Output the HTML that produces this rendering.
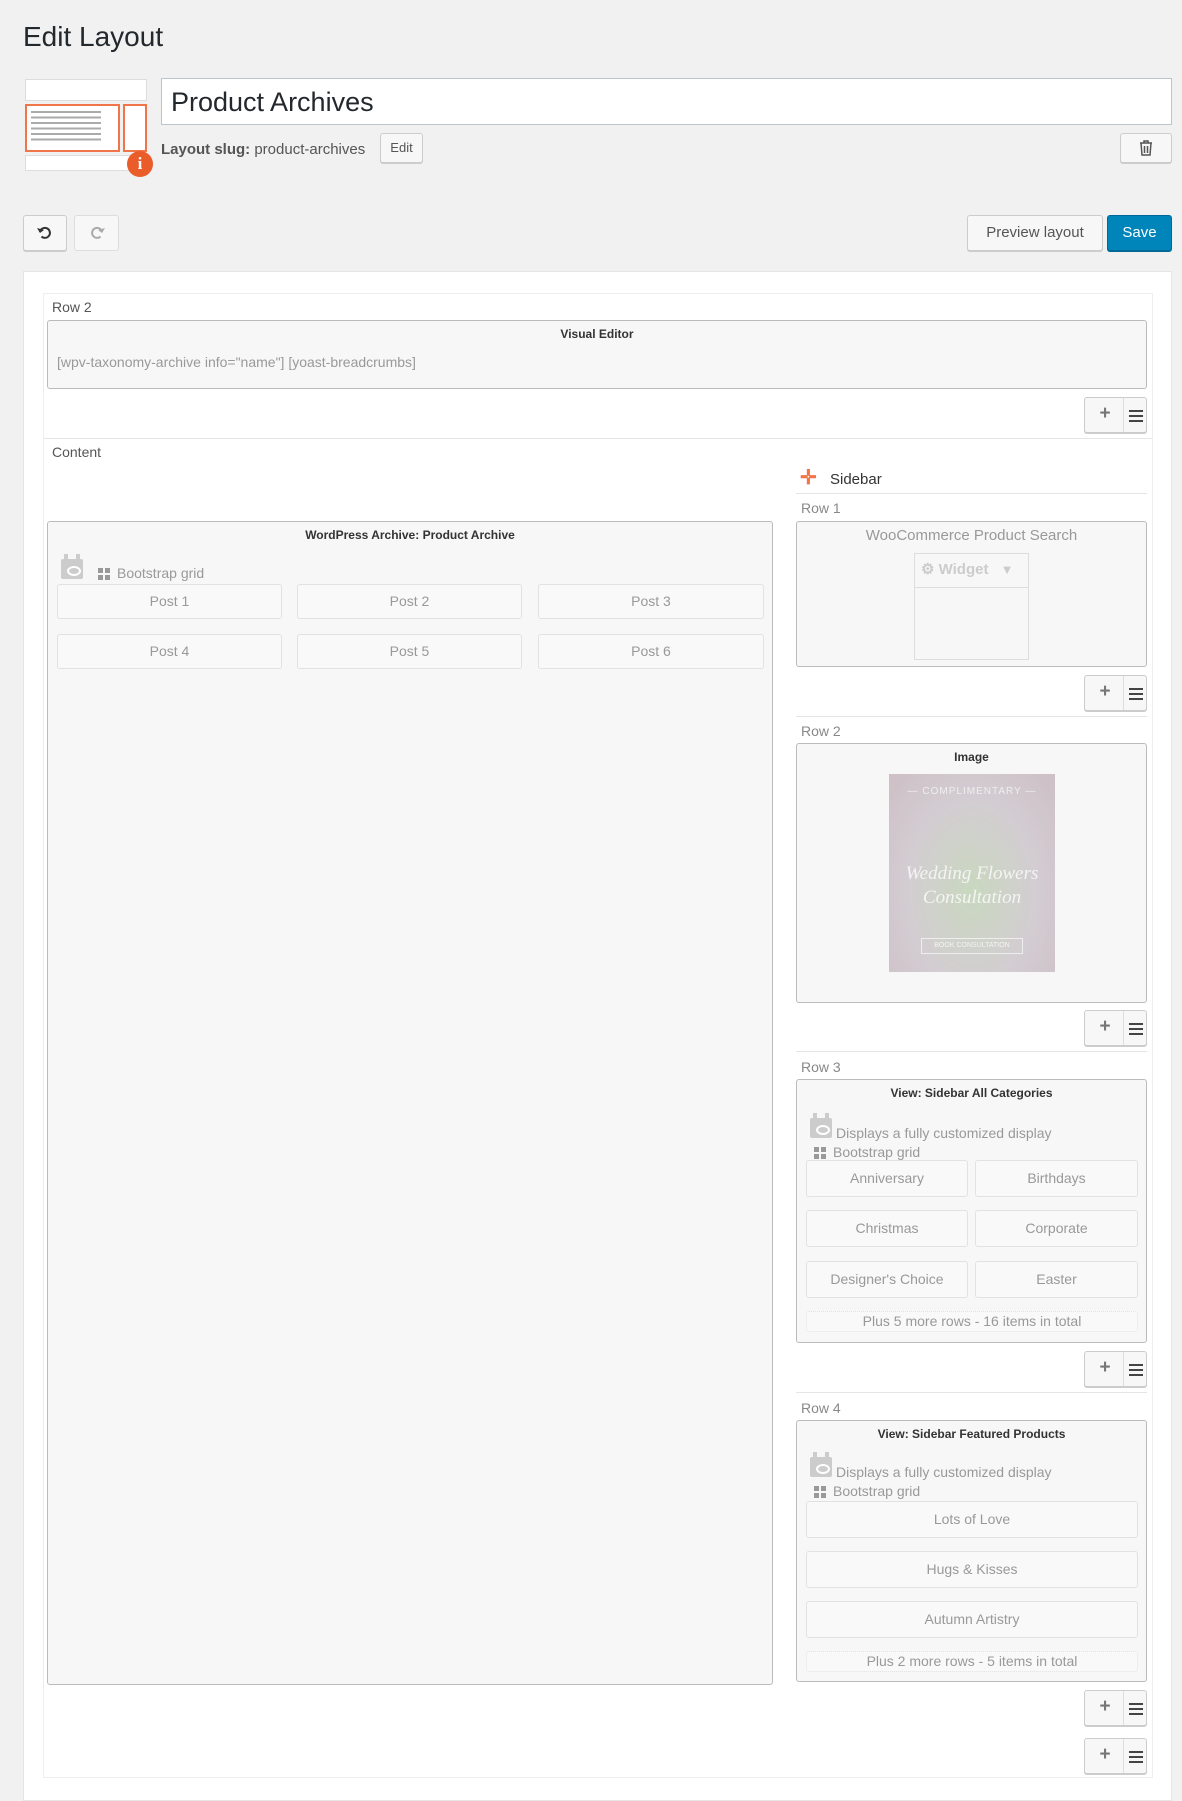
<!DOCTYPE html>
<html><head><meta charset="utf-8"><style>
*{box-sizing:border-box;margin:0;padding:0}
body{width:1182px;height:1788px;background:#f1f1f1;font-family:"Liberation Sans",sans-serif;color:#444;position:relative;overflow:hidden}
.a{position:absolute}
.btn{position:absolute;background:#f7f7f7;border:1px solid #ccc;border-radius:3px;box-shadow:0 1px 0 #ccc;font-size:15px;color:#555;text-align:center}
.cell{position:absolute;background:#f9f9f9;border:1px solid #e2e2e2;border-radius:3px;color:#999;font-size:14px;text-align:center}
.box{position:absolute;background:#f7f7f7;border:1px solid #bbb;border-radius:3px}
.lbl{position:absolute;font-size:14px;color:#555}
.ttl{position:absolute;font-size:12px;font-weight:bold;color:#333;text-align:center;left:0;right:0}
.line{position:absolute;height:1px;background:#e5e5e5}
.pm{position:absolute;width:63px;height:36px;border:1px solid #ccc;border-radius:3px;background:#f7f7f7;box-shadow:0 1px 0 #ccc}
.pm:before{content:"+";position:absolute;left:5px;top:5px;width:30px;text-align:center;font-size:19px;line-height:22px;font-weight:bold;color:#777}
.pm:after{content:"";position:absolute;left:38px;top:0;bottom:0;border-left:1px solid #ddd}
.pm i{position:absolute;left:44px;top:12px;width:14px;height:2px;background:#444;box-shadow:0 5px 0 #444,0 10px 0 #444}
.eye{position:absolute;width:22px;height:20px;background:#ccc;border-radius:2px}
.eye:before{content:"";position:absolute;left:3px;top:-5px;width:4px;height:6px;background:#ccc;box-shadow:12px 0 0 #ccc}
.eye:after{content:"";position:absolute;left:6px;top:7px;width:10px;height:6px;border:2px solid #fff;border-radius:50%}
.grid{position:absolute;width:12px;height:12px;background:linear-gradient(#f7f7f7,#f7f7f7) 5px 0/2px 12px no-repeat,linear-gradient(#f7f7f7,#f7f7f7) 0 5px/12px 2px no-repeat,#999}
.gt{font-size:14px;color:#999}
</style></head><body>
<div class="a" style="left:23px;top:21px;font-size:28px;color:#23282d">Edit Layout</div>

<div class="a" style="left:25px;top:79px;width:122px;height:22px;background:#fff;border:1px solid #ddd"></div>
<div class="a" style="left:25px;top:104px;width:95px;height:48px;background:#fff;border:2px solid #f0764a"></div>
<div class="a" style="left:31px;top:111px;width:70px;height:33px;background:repeating-linear-gradient(#aaa 0 2px,transparent 2px 5.5px)"></div>
<div class="a" style="left:123px;top:104px;width:24px;height:48px;background:#fff;border:2px solid #f0764a"></div>
<div class="a" style="left:25px;top:155px;width:122px;height:16px;background:#fff;border:1px solid #ddd"></div>
<div class="a" style="left:127px;top:151px;width:26px;height:26px;border-radius:50%;background:#ea5d2b;color:#fff;font-weight:bold;font-size:17px;text-align:center;line-height:26px;font-family:'Liberation Serif',serif">i</div>

<div class="a" style="left:161px;top:78px;width:1011px;height:47px;background:#fff;border:1px solid #b9c6d0"></div>
<div class="a" style="left:171px;top:87px;font-size:27px;color:#23282d">Product Archives</div>
<div class="a" style="left:161px;top:141px;font-size:15px;color:#555"><b>Layout slug:</b> product-archives</div>
<div class="btn" style="left:380px;top:133px;width:43px;height:30px;line-height:28px;font-size:13px">Edit</div>
<div class="btn" style="left:1120px;top:133px;width:52px;height:30px"><svg width="20" height="20" viewBox="0 0 20 20" style="margin-top:4px"><path d="M4 5h12M8 5V3h4v2M5 5l1 12h8l1-12M8.5 8v7M11.5 8v7" fill="none" stroke="#555" stroke-width="1.5"/></svg></div>

<div class="btn" style="left:23px;top:215px;width:44px;height:36px"><svg width="18" height="18" viewBox="0 0 18 18" style="margin-top:8px"><path d="M4 8a5 5 0 1 1 1.5 4.5" fill="none" stroke="#333" stroke-width="2"/><path d="M1 4l3 5 4-3z" fill="#333"/></svg></div>
<div class="btn" style="left:74px;top:215px;width:45px;height:36px;box-shadow:none;border-color:#ddd"><svg width="18" height="18" viewBox="0 0 18 18" style="margin-top:8px"><path d="M14 8a5 5 0 1 0-1.5 4.5" fill="none" stroke="#aaa" stroke-width="2"/><path d="M17 4l-3 5-4-3z" fill="#aaa"/></svg></div>
<div class="btn" style="left:967px;top:215px;width:136px;height:36px;line-height:34px">Preview layout</div>
<div class="btn" style="left:1107px;top:215px;width:65px;height:36px;line-height:34px;background:#0085ba;border-color:#006799;color:#fff;box-shadow:0 1px 0 #006799">Save</div>

<div class="a" style="left:23px;top:271px;width:1149px;height:1530px;background:#fff;border:1px solid #e5e5e5"></div>
<div class="a" style="left:43px;top:293px;width:1110px;height:1485px;background:#fff;border:1px solid #eee"></div>

<div class="lbl" style="left:52px;top:299px">Row 2</div>
<div class="box" style="left:47px;top:320px;width:1100px;height:69px">
 <div class="ttl" style="top:6px">Visual Editor</div>
 <div class="a" style="left:9px;top:33px;font-size:14px;color:#999">[wpv-taxonomy-archive info="name"] [yoast-breadcrumbs]</div>
</div>
<div class="pm" style="left:1084px;top:397px"><i></i></div>
<div class="line" style="left:44px;top:438px;width:1108px"></div>
<div class="lbl" style="left:52px;top:444px">Content</div>

<div class="box" style="left:47px;top:521px;width:726px;height:1164px">
 <div class="ttl" style="top:6px">WordPress Archive: Product Archive</div>
 <div class="eye" style="left:13px;top:37px"></div>
 <div class="grid" style="left:50px;top:46px"></div>
 <div class="a gt" style="left:69px;top:43px">Bootstrap grid</div>
</div>
<div class="cell" style="left:57px;top:584px;width:225px;height:35px;line-height:33px">Post 1</div>
<div class="cell" style="left:297px;top:584px;width:225px;height:35px;line-height:33px">Post 2</div>
<div class="cell" style="left:538px;top:584px;width:226px;height:35px;line-height:33px">Post 3</div>
<div class="cell" style="left:57px;top:634px;width:225px;height:35px;line-height:33px">Post 4</div>
<div class="cell" style="left:297px;top:634px;width:225px;height:35px;line-height:33px">Post 5</div>
<div class="cell" style="left:538px;top:634px;width:226px;height:35px;line-height:33px">Post 6</div>

<div class="a" style="left:800px;top:465px;color:#f0764a;font-size:20px;font-weight:bold">✛</div>
<div class="a" style="left:830px;top:471px;font-size:15px;color:#333">Sidebar</div>
<div class="line" style="left:796px;top:493px;width:351px"></div>
<div class="lbl" style="left:801px;top:500px;color:#888">Row 1</div>
<div class="box" style="left:796px;top:521px;width:351px;height:146px">
 <div class="ttl" style="top:5px;font-size:15px;font-weight:normal;color:#999">WooCommerce Product Search</div>
 <div class="a" style="left:117px;top:31px;width:115px;height:107px;border:1px solid #ddd;background:#f7f7f7">
  <div class="a" style="left:0;right:0;top:0;height:34px;border-bottom:1px solid #ddd;color:#ccc;font-size:15px;font-weight:bold;line-height:32px;padding-left:6px">⚙ Widget <span style="margin-left:8px;font-size:13px">▼</span></div>
 </div>
</div>
<div class="pm" style="left:1084px;top:675px"><i></i></div>
<div class="line" style="left:796px;top:716px;width:351px"></div>
<div class="lbl" style="left:801px;top:723px;color:#888">Row 2</div>
<div class="box" style="left:796px;top:743px;width:351px;height:260px">
 <div class="ttl" style="top:6px">Image</div>
 <div class="a" style="left:92px;top:30px;width:166px;height:198px;background:radial-gradient(ellipse at 50% 60%,#c9d8bf 0,#d3cdd2 55%,#cdbfc5 100%);overflow:hidden">
  <div class="a" style="left:0;right:0;top:12px;text-align:center;color:#eee;font-size:10px;letter-spacing:1px">— COMPLIMENTARY —</div>
  <div class="a" style="left:0;right:0;top:88px;text-align:center;color:#f4f4f4;font-family:'Liberation Serif',serif;font-style:italic;font-size:19px;line-height:24px">Wedding Flowers<br>Consultation</div>
  <div class="a" style="left:32px;top:164px;width:102px;height:16px;border:1px solid #eee;color:#f4f4f4;font-size:7px;text-align:center;line-height:14px">BOOK CONSULTATION</div>
 </div>
</div>
<div class="pm" style="left:1084px;top:1010px"><i></i></div>
<div class="line" style="left:796px;top:1051px;width:351px"></div>
<div class="lbl" style="left:801px;top:1059px;color:#888">Row 3</div>
<div class="box" style="left:796px;top:1079px;width:351px;height:264px">
 <div class="ttl" style="top:6px">View: Sidebar All Categories</div>
 <div class="eye" style="left:13px;top:38px"></div>
 <div class="a gt" style="left:39px;top:45px">Displays a fully customized display</div>
 <div class="grid" style="left:17px;top:67px"></div>
 <div class="a gt" style="left:36px;top:64px">Bootstrap grid</div>
</div>
<div class="cell" style="left:806px;top:1160px;width:162px;height:37px;line-height:35px">Anniversary</div>
<div class="cell" style="left:975px;top:1160px;width:163px;height:37px;line-height:35px">Birthdays</div>
<div class="cell" style="left:806px;top:1210px;width:162px;height:37px;line-height:35px">Christmas</div>
<div class="cell" style="left:975px;top:1210px;width:163px;height:37px;line-height:35px">Corporate</div>
<div class="cell" style="left:806px;top:1261px;width:162px;height:37px;line-height:35px">Designer's Choice</div>
<div class="cell" style="left:975px;top:1261px;width:163px;height:37px;line-height:35px">Easter</div>
<div class="cell" style="left:806px;top:1311px;width:332px;height:21px;line-height:19px;border-style:dotted">Plus 5 more rows - 16 items in total</div>
<div class="pm" style="left:1084px;top:1351px"><i></i></div>
<div class="line" style="left:796px;top:1392px;width:351px"></div>
<div class="lbl" style="left:801px;top:1400px;color:#888">Row 4</div>
<div class="box" style="left:796px;top:1420px;width:351px;height:262px">
 <div class="ttl" style="top:6px">View: Sidebar Featured Products</div>
 <div class="eye" style="left:13px;top:36px"></div>
 <div class="a gt" style="left:39px;top:43px">Displays a fully customized display</div>
 <div class="grid" style="left:17px;top:65px"></div>
 <div class="a gt" style="left:36px;top:62px">Bootstrap grid</div>
</div>
<div class="cell" style="left:806px;top:1501px;width:332px;height:37px;line-height:35px">Lots of Love</div>
<div class="cell" style="left:806px;top:1551px;width:332px;height:37px;line-height:35px">Hugs &amp; Kisses</div>
<div class="cell" style="left:806px;top:1601px;width:332px;height:37px;line-height:35px">Autumn Artistry</div>
<div class="cell" style="left:806px;top:1651px;width:332px;height:21px;line-height:19px;border-style:dotted">Plus 2 more rows - 5 items in total</div>
<div class="pm" style="left:1084px;top:1690px"><i></i></div>
<div class="pm" style="left:1084px;top:1738px"><i></i></div>
</body></html>
